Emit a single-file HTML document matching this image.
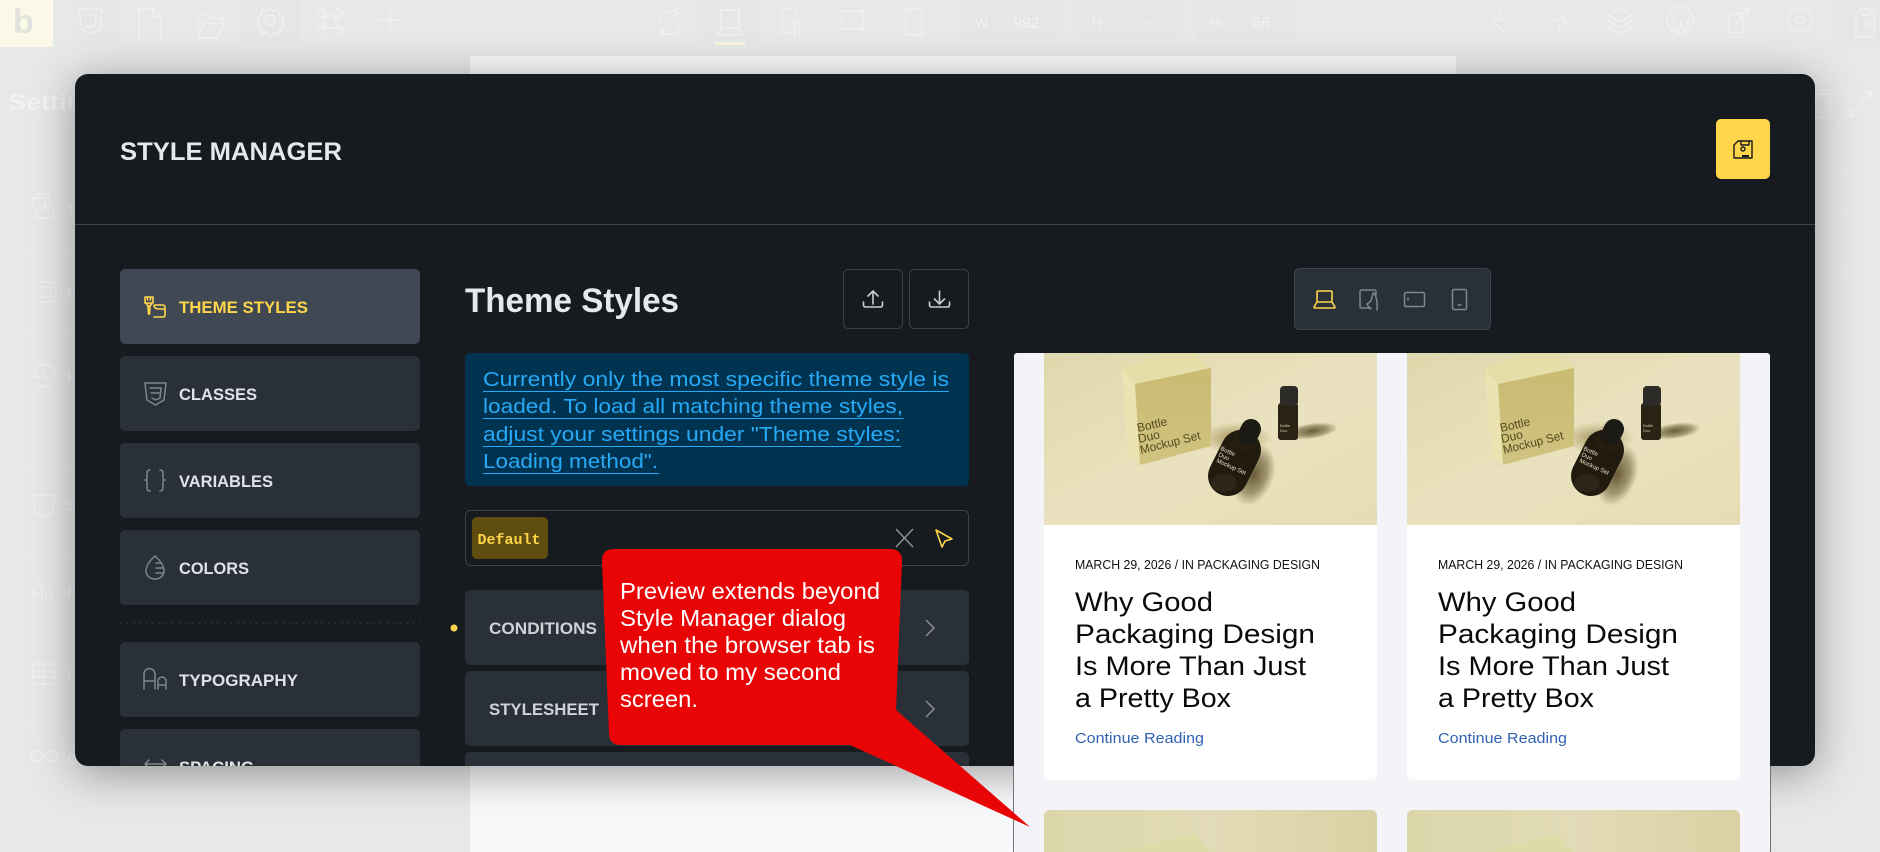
<!DOCTYPE html>
<html lang="en">
<head>
<meta charset="utf-8">
<title>Style Manager</title>
<style>
html,body{margin:0;padding:0;width:1880px;height:852px;overflow:hidden;background:#e7e9e8}
svg{display:block;position:absolute;left:0;top:0}
text{font-family:"Liberation Sans",sans-serif;white-space:pre}
.shadow{position:absolute;left:75px;top:74px;width:1740px;height:692px;border-radius:13px;box-shadow:0 7px 44px rgba(0,0,0,.38)}
.side{font-weight:700;font-size:17px;fill:#dfe3e8}
.sec{font-weight:700;font-size:17px;fill:#cfd3d8}
.info{font-size:20px;fill:#27a9f5}
.meta{font-size:12.5px;fill:#111}
.ttl{font-size:27px;fill:#0a0a0a}
.more{font-size:15px;fill:#3161b3}
.call{font-size:23px;fill:#fff}
.bgt{fill:#f1f2f2}
.bgi{fill:none;stroke:#f1f2f2;stroke-width:1.2}
.ic{fill:none;stroke:#80868e;stroke-width:1.5;stroke-linejoin:round;stroke-linecap:round}
.wh{fill:none;stroke:#c9cdd2;stroke-width:1.6;stroke-linecap:round;stroke-linejoin:round}
.ye{fill:none;stroke:#ffd54a;stroke-width:1.6;stroke-linejoin:round;stroke-linecap:round}
</style>
</head>
<body>
<svg xmlns="http://www.w3.org/2000/svg" width="1880" height="852" viewBox="0 0 1880 852">
<!-- app behind overlay -->
<rect width="1880" height="852" fill="#e7e9e8"/>
<rect x="470" y="56" width="986" height="796" fill="#f8f9fa"/>
<rect x="0" y="0" width="53" height="47" fill="#fdf9e8"/>
<rect x="78" y="0" width="42" height="44" fill="#e5e6e8"/>
<rect x="240" y="0" width="60" height="44" fill="#e5e6e8"/>
<rect x="702" y="0" width="58" height="44" fill="#e5e6e8"/>
<rect x="961" y="0" width="101" height="40" rx="4" fill="#e5e6e7"/>
<rect x="1078" y="0" width="100" height="40" rx="4" fill="#e5e6e7"/>
<rect x="1195" y="0" width="101" height="40" rx="4" fill="#e5e6e7"/>
<rect x="1838" y="0" width="42" height="44" fill="#e5e6e8"/>
<text x="13" y="33" font-size="34" font-weight="700" fill="#e2e2de">b</text>
<g class="bgi">
<path d="M79 9h23l-2 21-9 4-9-4zM85 15h11l-1 11-5 2-4-2"/>
<path d="M139 9h14l8 8v23h-22zM153 9v8h8"/>
<path d="M198 14h9l3 4h13v5M198 14v24h20l6-15h-20l-6 15"/>
<circle cx="270" cy="20" r="5"/><path d="M270 7l3 4 5-1 2 5 4 3-2 4 2 4-4 3-1 5-5-1-4 4-3-4-5 1-1-5-4-3 2-4-2-4 4-3 1-5 5 1z"/>
<path d="M324 16h12v12h-12zM324 16a4 4 0 1 1 0-6a4 4 0 0 1 0 6zM336 16a4 4 0 1 0 0-6M324 28a4 4 0 1 0 0 6M336 28a4 4 0 1 1 0 6"/>
<path d="M390 8v28M377 20h26"/>
<path d="M660 22a11 11 0 0 1 19-8M680 22a11 11 0 0 1-19 9M677 8l2 6-6 1M663 36l-2-6 6-1"/>
<path d="M721 10h18v18h-18zM721 28l-3 7h24l-3-7"/>
<path d="M782 9h14v24h-14zM792 20l3 16M798 18l2 18"/>
<path d="M842 11h21v18h-21z"/>
<path d="M906 9h16v26h-16z"/>
<path d="M1501 12l-8 10 6 4 6 8M1493 22a10 10 0 0 1 14 0"/>
<path d="M1558 12l8 10-6 4-2 8M1566 22a10 10 0 0 0-14 0"/>
<path d="M1620 8l12 7-12 7-12-7zM1608 21l12 7 12-7M1608 27l12 7 12-7"/>
<circle cx="1680" cy="20" r="13"/><path d="M1671 14l7 19 3-10 3 10 6-18"/>
<path d="M1729 14h14v18h-14zM1736 24l12-16M1741 8h7v7"/>
<path d="M1788 20a12 12 0 0 1 24 0a12 12 0 0 1-24 0z"/><circle cx="1800" cy="20" r="4"/>
<path d="M1860 9h14v28h-18V15zM1862 9v6h8V9"/><circle cx="1869" cy="24" r="3"/>
<path d="M1816 94h14v24h-14zM1812 94h22M1820 94v-4h6v4"/>
<path d="M1850 116l22-24M1863 92h9v9M1850 107v9h9"/>
<path d="M33 198h12v10h-12zM37 198v-4h12v14M36 208h18v10h-18z"/>
<path d="M34 282h22v20h-22zM40 287h10v10h-10"/>
<path d="M34 376a11 11 0 1 1 4 8M34 372v5h5M44 370v6l4 3"/>
<path d="M33 495h22l-2 18-9 4-9-4z"/>
<path d="M34 600v-12a4 4 0 0 1 8 0v12M34 594h8M46 600v-6a3 3 0 0 1 6 0v6M46 597h6"/>
<path d="M33 664h22v20h-22zM33 671h22M33 677h22M44 664v20"/>
<path d="M40 752a6 5 0 1 0 0 8l8-8a6 5 0 1 1 0 8z"/>
</g>
<rect x="715" y="42" width="30" height="3" fill="#fbf5dd"/>
<text class="bgt" x="975" y="27" font-size="14">W</text>
<text class="bgt" x="1013" y="28" font-size="16">992</text>
<text class="bgt" x="1092" y="27" font-size="14">H</text>
<text class="bgt" x="1144" y="27" font-size="14">-</text>
<text class="bgt" x="1209" y="27" font-size="14">%</text>
<text class="bgt" x="1252" y="28" font-size="16">66</text>
<text x="8" y="110" font-size="23" font-weight="700" fill="#f1f2f2" textLength="75" lengthAdjust="spacingAndGlyphs">Settin</text>
<g font-weight="700" font-size="15" fill="#f1f2f2">
<text x="67" y="214">T</text><text x="67" y="298">P</text><text x="67" y="382">H</text><text x="67" y="511">S</text><text x="67" y="596">F</text><text x="67" y="680">I</text><text x="67" y="764">C</text>
</g>
<g fill="none" stroke="#eaecec" stroke-width="1.2">
<rect x="1780" y="170" width="99" height="42" rx="4"/><rect x="1780" y="212" width="99" height="56" rx="4"/><rect x="1780" y="277" width="99" height="43" rx="4"/>
<path d="M20 176h410M20 250h410M20 334h410M20 470h410M20 555h410M20 640h410M20 725h410"/>
</g>
</svg>

<div class="shadow"></div>

<svg xmlns="http://www.w3.org/2000/svg" width="1880" height="852" viewBox="0 0 1880 852">
<defs>
<clipPath id="dlg"><rect x="75" y="74" width="1740" height="692" rx="13"/></clipPath>
<clipPath id="prev"><rect x="1014" y="353" width="756" height="499" rx="3"/></clipPath>
<clipPath id="im"><rect x="0" y="0" width="333" height="172"/></clipPath>
<linearGradient id="sand" x1="0" y1="0" x2="1" y2="1"><stop offset="0" stop-color="#dfd8ad"/><stop offset=".55" stop-color="#eae2bf"/><stop offset="1" stop-color="#e6dcb4"/></linearGradient>
<linearGradient id="sand2" x1="0" y1="0" x2="1" y2="0"><stop offset="0" stop-color="#dbd6aa"/><stop offset=".5" stop-color="#e2dbb7"/><stop offset="1" stop-color="#d9d1a4"/></linearGradient>
<linearGradient id="face" x1="0" y1="0" x2="0" y2="1"><stop offset="0" stop-color="#c9bb72"/><stop offset="1" stop-color="#d0c380"/></linearGradient>
<radialGradient id="sd"><stop offset="0" stop-color="#3f2f0e" stop-opacity=".75"/><stop offset=".6" stop-color="#4a3a15" stop-opacity=".45"/><stop offset="1" stop-color="#4a3a15" stop-opacity="0"/></radialGradient>
<radialGradient id="sd2"><stop offset="0" stop-color="#8a7638" stop-opacity=".75"/><stop offset="1" stop-color="#8a7638" stop-opacity="0"/></radialGradient>
</defs>

<!-- dialog -->
<rect x="75" y="74" width="1740" height="692" rx="13" fill="#171b1f"/>
<g clip-path="url(#dlg)">
<rect x="75" y="224" width="1740" height="1" fill="#3a4350"/>

<text x="120" y="160" font-size="25" font-weight="700" fill="#e6e9ec" textLength="222" lengthAdjust="spacingAndGlyphs">STYLE MANAGER</text>
<rect x="1716" y="119" width="54" height="60" rx="5" fill="#ffd54a"/>
<g fill="none" stroke="#16191d" stroke-width="1.4" stroke-linejoin="round">
<path d="M1738 141h14v17h-18v-13zM1741 141v4h8v-4"/><circle cx="1743" cy="149" r="2"/><path d="M1742 156h7" stroke-width="2"/>
</g>

<!-- sidebar -->
<rect x="120" y="269" width="300" height="75" rx="5" fill="#3f4853"/>
<rect x="120" y="356" width="300" height="75" rx="5" fill="#2a3038"/>
<rect x="120" y="443" width="300" height="75" rx="5" fill="#2a3038"/>
<rect x="120" y="530" width="300" height="75" rx="5" fill="#2a3038"/>
<path d="M120 623h300" stroke="#3f4650" stroke-width="1" stroke-dasharray="1.5 5"/>
<rect x="120" y="642" width="300" height="75" rx="5" fill="#2a3038"/>
<rect x="120" y="729" width="300" height="75" rx="5" fill="#2a3038"/>

<text class="side" x="179" y="313" style="fill:#ffd54a" textLength="129" lengthAdjust="spacingAndGlyphs">THEME STYLES</text>
<text class="side" x="179" y="400" textLength="78" lengthAdjust="spacingAndGlyphs">CLASSES</text>
<text class="side" x="179" y="487" textLength="94" lengthAdjust="spacingAndGlyphs">VARIABLES</text>
<text class="side" x="179" y="574" textLength="70" lengthAdjust="spacingAndGlyphs">COLORS</text>
<text class="side" x="179" y="686" textLength="119" lengthAdjust="spacingAndGlyphs">TYPOGRAPHY</text>
<text class="side" x="179" y="773" textLength="75" lengthAdjust="spacingAndGlyphs">SPACING</text>

<g class="ye">
<path d="M145 297h8v6h-8zM147.500 297v3M150.500 297v3M146 303l2 3h2l2-3M148 306l.5 8h1l.5-8"/>
<path d="M154 305h8q3 0 3 2v8q0 2-2 2h-9M154 306q1 3 5 3h6"/>
</g>
<g class="ic">
<path d="M145 383h21l-2 17-8.500 5-8.500-5zM150 388h11l-1 10-4.500 2-3.500-2M151 393h8"/>
<path d="M150 470q-3 0-3 3v5q0 2-2 2q2 0 2 2v6q0 3 3 3M160 470q3 0 3 3v5q0 2 2 2q-2 0-2 2v6q0 3-3 3"/>
<path d="M155 556q9 8 9 15a9 8 0 0 1-18 0q0-7 9-15zM156 563h4M156 568h7M156 573h7"/>
<path d="M144 689v-15a5.500 5.500 0 0 1 11 0v15M144 681h11M158 689v-8a4 4 0 0 1 8 0v8M158 685h8"/>
<path d="M146 764h19M149 760l-4 4 4 4M162 760l4 4-4 4"/>
</g>

<!-- middle -->
<text x="465" y="312" font-size="34" font-weight="700" fill="#e6e9ec" textLength="214" lengthAdjust="spacingAndGlyphs">Theme Styles</text>
<rect x="843.500" y="269.500" width="59" height="59" rx="5" fill="#171b1f" stroke="#3a4048"/>
<rect x="909.500" y="269.500" width="59" height="59" rx="5" fill="#171b1f" stroke="#3a4048"/>
<g class="wh">
<path d="M873 304v-13M868 296l5-5 5 5M863.500 302v3q0 2 2 2h15q2 0 2-2v-3"/>
<path d="M939.500 291v13M934.500 299l5 5 5-5M929.500 302v3q0 2 2 2h16q2 0 2-2v-3"/>
</g>

<rect x="465" y="353" width="504" height="133" rx="5" fill="#003350"/>
<text class="info" x="483" y="386" textLength="466" lengthAdjust="spacingAndGlyphs">Currently only the most specific theme style is</text>
<rect x="483" y="391" width="466" height="1" fill="#27a9f5"/>
<text class="info" x="483" y="413" textLength="420" lengthAdjust="spacingAndGlyphs">loaded. To load all matching theme styles,</text>
<rect x="483" y="418" width="420.500" height="1" fill="#27a9f5"/>
<text class="info" x="483" y="441" textLength="418" lengthAdjust="spacingAndGlyphs">adjust your settings under "Theme styles:</text>
<rect x="483" y="446" width="418" height="1" fill="#27a9f5"/>
<text class="info" x="483" y="468" textLength="175" lengthAdjust="spacingAndGlyphs">Loading method".</text>
<rect x="483" y="473" width="176" height="1" fill="#27a9f5"/>

<rect x="465.500" y="510.500" width="503" height="55" rx="5" fill="#171b1f" stroke="#3c434d"/>
<rect x="472" y="517" width="76" height="42" rx="5" fill="#5f4d10"/>
<text x="477.500" y="544" style="font-family:'Liberation Mono',monospace" font-size="15" font-weight="700" fill="#ffd54a">Default</text>
<path d="M896 529l17 18M913 529l-17 18" stroke="#8b9096" stroke-width="1.5" fill="none"/>
<path class="ye" d="M936 530l16 9-7 2-3 6z"/>

<circle cx="454" cy="628" r="3.500" fill="#ffd54a"/>
<rect x="465" y="590" width="504" height="75" rx="5" fill="#2a3038"/>
<rect x="465" y="671" width="504" height="75" rx="5" fill="#2a3038"/>
<rect x="465" y="752" width="504" height="75" rx="5" fill="#2a3038"/>
<text class="sec" x="489" y="634" textLength="108" lengthAdjust="spacingAndGlyphs">CONDITIONS</text>
<text class="sec" x="489" y="715" textLength="110" lengthAdjust="spacingAndGlyphs">STYLESHEET</text>
<path d="M926 620l8 8-8 8M926 701l8 8-8 8" fill="none" stroke="#8b9096" stroke-width="1.5"/>

<!-- device panel -->
<rect x="1294.500" y="268.500" width="196" height="61" rx="5" fill="#2a3038" stroke="#3e4550"/>
<g class="ye"><path d="M1317 302v-10q0-1 1-1h13q1 0 1 1v10M1317 302h15l3 5q0 1-1 1h-19q-1 0-1-1z"/></g>
<g class="ic">
<path d="M1371 308h-9q-2 0-2-2v-14q0-2 2-2h12q2 0 2 2v3M1370 309l-3-5 4-3 2-8h1q4 6 3 17"/>
<rect x="1404.500" y="292.500" width="20" height="14" rx="1.500"/><path d="M1408 298v2"/>
<rect x="1452.500" y="289.500" width="14" height="20" rx="1.500"/><path d="M1458 305h3"/>
</g>
</g>

<!-- preview (extends past dialog) -->
<g clip-path="url(#prev)">
<rect x="1013" y="352" width="758" height="500" fill="#f4f3f7"/>
<rect x="1044" y="353" width="333" height="427" rx="6" fill="#fff"/>
<rect x="1407" y="353" width="333" height="427" rx="6" fill="#fff"/>

<g transform="translate(1044 353)" clip-path="url(#im)">
<rect width="333" height="172" fill="url(#sand)"/>
<ellipse cx="192" cy="85" rx="36" ry="16" fill="url(#sd2)"/>
<ellipse cx="210" cy="122" rx="20" ry="32" transform="rotate(20 210 122)" fill="url(#sd)"/>
<ellipse cx="268" cy="78" rx="26" ry="8" transform="rotate(-8 268 78)" fill="url(#sd)"/>
<path d="M78 15L120 0h30l17 15-76 16z" fill="#e6dea8"/>
<path d="M78 15l13 16 5 81-12-9z" fill="#ebe4b2"/>
<path d="M91 31l76-16v78l-71 19z" fill="url(#face)"/>
<g fill="#55491f" font-size="12">
<text x="94" y="79" transform="rotate(-13 94 79)">Bottle</text>
<text x="95" y="90" transform="rotate(-13 95 90)">Duo</text>
<text x="97" y="101" transform="rotate(-14 97 101)" textLength="62" lengthAdjust="spacingAndGlyphs">Mockup Set</text>
</g>
<path d="M184 123l13-26" stroke="#211a0e" stroke-width="40" stroke-linecap="round"/>
<path d="M197 97l7-15" stroke="#241d10" stroke-width="24"/>
<path d="M204 82l3-6" stroke="#1c1a15" stroke-width="20" stroke-linecap="round"/>
<ellipse cx="180" cy="130" rx="13" ry="9" fill="#322c1f" opacity=".7"/>
<g fill="#e8e2c8" font-size="6"><text x="176" y="97" transform="rotate(24 176 97)">Bottle</text><text x="174" y="103" transform="rotate(24 174 103)">Duo</text><text x="172" y="109" transform="rotate(24 172 109)">Mockup Set</text></g>
<rect x="234" y="50" width="20" height="37" rx="3" fill="#2a2213"/>
<rect x="236" y="33" width="18" height="20" rx="4" fill="#2d2b28"/>
<g fill="#cfc9a8" font-size="4"><text x="236" y="74">Bottle</text><text x="236" y="79">Duo</text></g>
</g>
<g transform="translate(1407 353)" clip-path="url(#im)">
<rect width="333" height="172" fill="url(#sand)"/>
<ellipse cx="192" cy="85" rx="36" ry="16" fill="url(#sd2)"/>
<ellipse cx="210" cy="122" rx="20" ry="32" transform="rotate(20 210 122)" fill="url(#sd)"/>
<ellipse cx="268" cy="78" rx="26" ry="8" transform="rotate(-8 268 78)" fill="url(#sd)"/>
<path d="M78 15L120 0h30l17 15-76 16z" fill="#e6dea8"/>
<path d="M78 15l13 16 5 81-12-9z" fill="#ebe4b2"/>
<path d="M91 31l76-16v78l-71 19z" fill="url(#face)"/>
<g fill="#55491f" font-size="12">
<text x="94" y="79" transform="rotate(-13 94 79)">Bottle</text>
<text x="95" y="90" transform="rotate(-13 95 90)">Duo</text>
<text x="97" y="101" transform="rotate(-14 97 101)" textLength="62" lengthAdjust="spacingAndGlyphs">Mockup Set</text>
</g>
<path d="M184 123l13-26" stroke="#211a0e" stroke-width="40" stroke-linecap="round"/>
<path d="M197 97l7-15" stroke="#241d10" stroke-width="24"/>
<path d="M204 82l3-6" stroke="#1c1a15" stroke-width="20" stroke-linecap="round"/>
<ellipse cx="180" cy="130" rx="13" ry="9" fill="#322c1f" opacity=".7"/>
<g fill="#e8e2c8" font-size="6"><text x="176" y="97" transform="rotate(24 176 97)">Bottle</text><text x="174" y="103" transform="rotate(24 174 103)">Duo</text><text x="172" y="109" transform="rotate(24 172 109)">Mockup Set</text></g>
<rect x="234" y="50" width="20" height="37" rx="3" fill="#2a2213"/>
<rect x="236" y="33" width="18" height="20" rx="4" fill="#2d2b28"/>
<g fill="#cfc9a8" font-size="4"><text x="236" y="74">Bottle</text><text x="236" y="79">Duo</text></g>
</g>

<text class="meta" x="1075" y="569" textLength="245" lengthAdjust="spacingAndGlyphs">MARCH 29, 2026 / IN PACKAGING DESIGN</text>
<text class="ttl" x="1075" y="611" textLength="138" lengthAdjust="spacingAndGlyphs">Why Good</text>
<text class="ttl" x="1075" y="643" textLength="240" lengthAdjust="spacingAndGlyphs">Packaging Design</text>
<text class="ttl" x="1075" y="675" textLength="231" lengthAdjust="spacingAndGlyphs">Is More Than Just</text>
<text class="ttl" x="1075" y="707" textLength="156" lengthAdjust="spacingAndGlyphs">a Pretty Box</text>
<text class="more" x="1075" y="743" textLength="129" lengthAdjust="spacingAndGlyphs">Continue Reading</text>

<text class="meta" x="1438" y="569" textLength="245" lengthAdjust="spacingAndGlyphs">MARCH 29, 2026 / IN PACKAGING DESIGN</text>
<text class="ttl" x="1438" y="611" textLength="138" lengthAdjust="spacingAndGlyphs">Why Good</text>
<text class="ttl" x="1438" y="643" textLength="240" lengthAdjust="spacingAndGlyphs">Packaging Design</text>
<text class="ttl" x="1438" y="675" textLength="231" lengthAdjust="spacingAndGlyphs">Is More Than Just</text>
<text class="ttl" x="1438" y="707" textLength="156" lengthAdjust="spacingAndGlyphs">a Pretty Box</text>
<text class="more" x="1438" y="743" textLength="129" lengthAdjust="spacingAndGlyphs">Continue Reading</text>

<rect x="1044" y="810" width="333" height="60" rx="6" fill="url(#sand2)"/>
<rect x="1407" y="810" width="333" height="60" rx="6" fill="url(#sand2)"/>
<path d="M1122 852l72-19 16 19z" fill="#dedba8"/>
<path d="M1485 852l72-19 16 19z" fill="#dedba8"/>
</g>
<path d="M1013.500 766v86M1770.500 766v86" stroke="#6f757d" stroke-width="1" fill="none"/>

<!-- red callout -->
<path d="M614 549H890Q902 549 902 561L896 710L1030 827L850 745H621Q609 745 609 733L602 561Q602 549 614 549Z" fill="#e90505"/>
<text class="call" x="620" y="599" textLength="260" lengthAdjust="spacingAndGlyphs">Preview extends beyond</text>
<text class="call" x="620" y="626" textLength="226" lengthAdjust="spacingAndGlyphs">Style Manager dialog</text>
<text class="call" x="620" y="653" textLength="255" lengthAdjust="spacingAndGlyphs">when the browser tab is</text>
<text class="call" x="620" y="680" textLength="221" lengthAdjust="spacingAndGlyphs">moved to my second</text>
<text class="call" x="620" y="707" textLength="78" lengthAdjust="spacingAndGlyphs">screen.</text>
</svg>
</body>
</html>
